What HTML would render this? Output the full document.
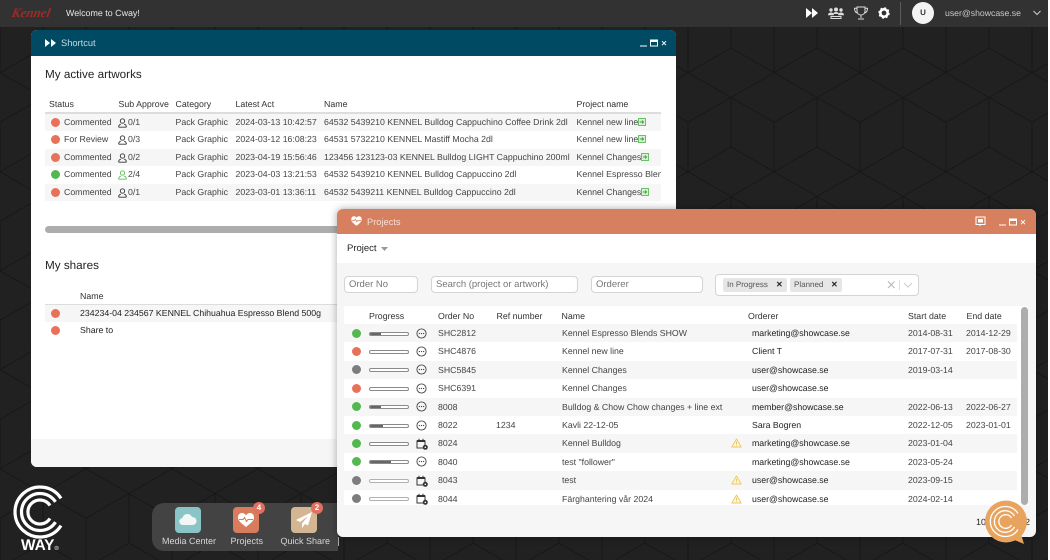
<!DOCTYPE html>
<html><head><meta charset="utf-8"><style>
html,body{margin:0;padding:0;width:1050px;height:560px;overflow:hidden;background:#fff;font-family:"Liberation Sans",sans-serif;text-rendering:geometricPrecision}
#bg{position:absolute;left:0;top:0;width:1048px;height:560px}
.a{position:absolute;white-space:nowrap}
.win{position:absolute;border-radius:6px;overflow:hidden;background:#fff}
.r{position:absolute;font-size:8.75px;color:#444;white-space:nowrap}
.r span,.r svg,.r i{position:absolute}
.r span{top:0}
.d{width:9px;height:9px;border-radius:50%;display:block}
.re{background:#e8715a}.gr{background:#52b84f}.gy{background:#7d7d80}
#s .r{left:14px;width:616px;height:17.4px;line-height:17.4px}
#s .o,#p .o{background:#f6f6f6}
#s .d{left:6px;top:4px}
.c1{left:19px}.c2{left:73px;top:4px}.t2{left:83px}.c3{left:130.5px}.c4{left:190.5px}.c5{left:279px}.c6{left:531.5px;width:84.5px;overflow:hidden}
.h{font-size:8.8px;color:#333;line-height:12px}
#p .r{left:7px;width:673px;height:18.4px;line-height:18.4px}
#p .d{left:7.5px;top:4.7px}
.b{left:25px;top:7.5px;width:38px;height:2px;border:1px solid #8a8a8a;border-radius:2px;background:#fff;overflow:hidden}
.b b{display:block;height:100%;background:#666}
.l{border-color:#b0b0b0}
.k1{left:94px}.k2{left:152px}.k3{left:218px}.k4{left:408px;color:#222}.k5{left:564px}.k6{left:622px}
.ic{left:72px;top:3.5px}
.w{left:387px;top:4px}
.in{position:absolute;top:276px;height:15px;border:1px solid #d4d4d4;border-radius:4px;background:#fff;font-size:9.5px;line-height:15px;color:#777;padding-left:4px;box-sizing:content-box}
.r svg.ln{position:static;vertical-align:-1px}
</style></head><body>
<svg width="0" height="0" style="position:absolute"><defs>
<symbol id="more" viewBox="0 0 11 11"><circle cx="5.5" cy="5.5" r="4.6" fill="none" stroke="#444" stroke-width=".9"/><circle cx="3.4" cy="5.5" r=".65" fill="#444"/><circle cx="5.5" cy="5.5" r=".65" fill="#444"/><circle cx="7.6" cy="5.5" r=".65" fill="#444"/></symbol>
<symbol id="cal" viewBox="0 0 12 12"><path d="M1 3h8v7H1zM3 .8v2M7 .8v2" fill="none" stroke="#333" stroke-width="1"/><rect x="1" y="2" width="8" height="2" fill="#333"/><circle cx="9.3" cy="9.3" r="2.5" fill="#333"/><circle cx="9.3" cy="9.3" r=".8" fill="#fff"/></symbol>
<symbol id="warn" viewBox="0 0 11 10"><path d="M5.5 1L10.2 9H.8z" fill="#fdf6dc" stroke="#eec65c" stroke-width=".9" stroke-linejoin="round"/><path d="M5.5 3.8v2.6M5.5 7.2v.7" stroke="#e2b53e" stroke-width=".8"/></symbol>
<symbol id="usr" viewBox="0 0 9 10"><circle cx="4.5" cy="3" r="2.2" fill="none" stroke="currentColor" stroke-width=".9"/><path d="M.7 9.2c0-2 1.2-2.9 2.2-3M8.3 9.2c0-2-1.2-2.9-2.2-3M.7 9.2h7.6" fill="none" stroke="currentColor" stroke-width=".9"/></symbol>
<symbol id="lnk" viewBox="0 0 8 8"><rect x=".5" y=".5" width="7" height="7" fill="#d9f2d6" stroke="#5dbb58" stroke-width=".9"/><path d="M1.8 4h3.6M4 2.4L5.6 4 4 5.6" fill="none" stroke="#3fa43a" stroke-width=".9"/></symbol>
<symbol id="ctl" viewBox="0 0 30 8"><path d="M1 7h7" stroke="#fff" stroke-width="1"/><rect x="11.5" y="1" width="7" height="6" fill="none" stroke="#fff"/><rect x="11.5" y="1" width="7" height="2" fill="#fff"/><path d="M23 2.2l4 4M27 2.2l-4 4" stroke="#fff" stroke-width="1"/></symbol>
<pattern id="hx" width="86" height="99" patternUnits="userSpaceOnUse" y="48"><path d="M43 49.5V99M0 74.25V99M86 74.25V99M0 0V24.75M86 0V24.75M43 0L0 24.75L43 49.5L0 74.25M43 0L86 24.75L43 49.5L86 74.25" fill="none" stroke="#171717" stroke-width="1"/></pattern>
</defs></svg>

<svg id="bg"><rect width="1048" height="560" fill="#212122"/><rect width="1048" height="560" fill="url(#hx)"/></svg>

<!-- top bar -->
<div class="a" style="left:0;top:0;width:1048px;height:27px;background:#323232"></div>
<div class="a" style="left:12px;top:5px;font:italic 700 13px 'Liberation Serif',serif;color:#a02a28;line-height:16px;transform:skewX(-12deg)">Kennel</div>
<div class="a" style="left:66px;top:7px;font-size:8.9px;line-height:12px;color:#e6e6e6">Welcome to Cway!</div>
<svg class="a" style="left:800px;top:3px" width="100" height="20" viewBox="0 0 100 20">
<path d="M6 5l6 5-6 5zM12 5l6 5-6 5z" fill="#fff"/>
<g fill="#ddd"><circle cx="36" cy="6.5" r="2"/><circle cx="31" cy="7" r="1.7"/><circle cx="41" cy="7" r="1.7"/><path d="M28 12.2c0-2 1.5-2.7 3-2.7s2.6.7 3 2.7zM38 12.2c.4-2 1.5-2.7 3-2.7s3 .7 3 2.7zM33 11c.5-1.5 1.5-2 3-2s2.5.5 3 2z"/></g><path d="M31 13.5h10v2H31z" fill="none" stroke="#ddd"/>
<path d="M57 4h8v4c0 2.5-1.8 4-4 4s-4-1.5-4-4zM57 5.2h-2.5c0 3 1 4.3 3 4.8M65 5.2h2.5c0 3-1 4.3-3 4.8M61 12v3M58 16h6" fill="none" stroke="#ddd" stroke-width="1"/>
<circle cx="84" cy="10" r="3.7" fill="none" stroke="#fff" stroke-width="2.6"/><circle cx="84" cy="10" r="5" fill="none" stroke="#fff" stroke-width="1.4" stroke-dasharray="2 1.93"/>
</svg>
<div class="a" style="left:900px;top:2px;width:1px;height:23px;background:#5c5c5c"></div>
<div class="a" style="left:912px;top:2px;width:22px;height:22px;border-radius:50%;background:#f4f4f4;color:#333;font:700 8px/22px 'Liberation Sans',sans-serif;text-align:center">U</div>
<div class="a" style="left:945px;top:7px;font-size:8.7px;line-height:12px;color:#c8c8c8">user@showcase.se</div>
<svg class="a" style="left:1032px;top:10px" width="10" height="6"><path d="M1.5 1L5 4.5 8.5 1" fill="none" stroke="#ccc"/></svg>

<!-- Shortcut -->
<div class="win" style="left:31px;top:30px;width:645px;height:437px">
 <div class="a" style="left:0;top:0;width:645px;height:26px;background:#004a63"></div>
 <svg class="a" style="left:14px;top:9px" width="12" height="8"><path d="M0 0l5 4-5 4zM6 0l5 4-5 4z" fill="#fff"/></svg>
 <div class="a" style="left:30px;top:7px;font-size:9.3px;line-height:12px;color:#c4dbe4">Shortcut</div>
 <svg class="a" style="left:608px;top:9px" width="30" height="8"><use href="#ctl"/></svg>
 <div class="a" style="left:14px;top:37px;font-size:11.7px;line-height:15px;color:#222">My active artworks</div>
 <div class="a h" style="left:18px;top:68px">Status</div>
 <div class="a h" style="left:87.5px;top:68px">Sub Approve</div>
 <div class="a h" style="left:144.5px;top:68px">Category</div>
 <div class="a h" style="left:204.5px;top:68px">Latest Act</div>
 <div class="a h" style="left:293px;top:68px">Name</div>
 <div class="a h" style="left:545.5px;top:68px">Project name</div>
 <div class="a" style="left:14px;top:82px;width:616px;height:2px;background:#ddd"></div>
 <div id="s">
  <div class="r o" style="top:84px"><i class="d re"></i><span class="c1">Commented</span><svg class="c2" style="color:#333" width="9" height="10"><use href="#usr"/></svg><span class="t2">0/1</span><span class="c3">Pack Graphic</span><span class="c4">2024-03-13 10:42:57</span><span class="c5">64532 5439210 KENNEL Bulldog Cappuchino Coffee Drink 2dl</span><span class="c6">Kennel new line<svg class="ln" width="8" height="8"><use href="#lnk"/></svg></span></div>
  <div class="r" style="top:101.4px"><i class="d re"></i><span class="c1">For Review</span><svg class="c2" style="color:#333" width="9" height="10"><use href="#usr"/></svg><span class="t2">0/3</span><span class="c3">Pack Graphic</span><span class="c4">2024-03-12 16:08:23</span><span class="c5">64531 5732210 KENNEL Mastiff Mocha 2dl</span><span class="c6">Kennel new line<svg class="ln" width="8" height="8"><use href="#lnk"/></svg></span></div>
  <div class="r o" style="top:118.8px"><i class="d re"></i><span class="c1">Commented</span><svg class="c2" style="color:#333" width="9" height="10"><use href="#usr"/></svg><span class="t2">0/2</span><span class="c3">Pack Graphic</span><span class="c4">2023-04-19 15:56:46</span><span class="c5">123456 123123-03 KENNEL Bulldog LIGHT Cappuchino 200ml</span><span class="c6">Kennel Changes<svg class="ln" width="8" height="8"><use href="#lnk"/></svg></span></div>
  <div class="r" style="top:136.2px"><i class="d gr"></i><span class="c1">Commented</span><svg class="c2" style="color:#5dbb58" width="9" height="10"><use href="#usr"/></svg><span class="t2">2/4</span><span class="c3">Pack Graphic</span><span class="c4">2023-04-03 13:21:53</span><span class="c5">64532 5439210 KENNEL Bulldog Cappuccino 2dl</span><span class="c6">Kennel Espresso Blends</span></div>
  <div class="r o" style="top:153.6px"><i class="d re"></i><span class="c1">Commented</span><svg class="c2" style="color:#333" width="9" height="10"><use href="#usr"/></svg><span class="t2">0/1</span><span class="c3">Pack Graphic</span><span class="c4">2023-03-01 13:36:11</span><span class="c5">64532 5439211 KENNEL Bulldog Cappuccino 2dl</span><span class="c6">Kennel Changes<svg class="ln" width="8" height="8"><use href="#lnk"/></svg></span></div>
 </div>
 <div class="a" style="left:14px;top:196px;width:616px;height:7px;border-radius:4px;background:#adadad"></div>
 <div class="a" style="left:14px;top:228px;font-size:11.7px;line-height:15px;color:#222">My shares</div>
 <div class="a h" style="left:49px;top:260px">Name</div>
 <div class="a" style="left:14px;top:274px;width:616px;height:1.5px;background:#ddd"></div>
 <div class="a" style="left:14px;top:275px;width:616px;height:17.4px;background:#f6f6f6"></div>
 <i class="a d re" style="left:20px;top:279px"></i>
 <div class="a" style="left:49px;top:277px;font-size:8.75px;line-height:12px;color:#222">234234-04 234567 KENNEL Chihuahua Espresso Blend 500g</div>
 <i class="a d re" style="left:20px;top:296px"></i>
 <div class="a" style="left:49px;top:294px;font-size:8.75px;line-height:12px;color:#222">Share to</div>
 <div class="a" style="left:0;top:409px;width:645px;height:28px;background:#f6f6f6"></div>
</div>

<!-- Logo -->
<svg class="a" style="left:0;top:480px" width="70" height="62" viewBox="0 480 70 62">
<g fill="none" stroke="#fff" stroke-width="3.2">
<path d="M61 498.4A25 25 0 1 0 61 525.6"/>
<path d="M55.5 501.9A18.5 18.5 0 1 0 55.5 522.1"/>
<path d="M50 505.5A12 12 0 1 0 50 518.5"/>
</g></svg>
<div class="a" style="left:21px;top:537px;font:700 15.4px/17px 'Liberation Sans',sans-serif;color:#fff;letter-spacing:-.1px">WAY<span style="font-size:6px;font-weight:400;letter-spacing:0">®</span></div>

<!-- Dock -->
<div class="a" style="left:152px;top:503px;width:186px;height:48px;border-radius:12px 0 0 12px;background:#434343"></div>
<div class="a" style="left:175px;top:507px;width:26px;height:26px;border-radius:4px;background:#8ac4c6"></div>
<svg class="a" style="left:179px;top:513px" width="18" height="13"><path d="M4 12a3.5 3.5 0 0 1-.5-7A5 5 0 0 1 13 4a4 4 0 0 1 1 8z" fill="#f2f6f6"/></svg>
<div class="a" style="left:233px;top:507px;width:26px;height:26px;border-radius:4px;background:#d97c5e"></div>
<svg class="a" style="left:237px;top:512px" width="18" height="16"><path d="M9 15C4 11 1 9 1 5.3 1 2.5 3 1 5 1c1.7 0 3 1 4 2.2C10 2 11.3 1 13 1c2 0 4 1.5 4 4.3C17 9 14 11 9 15z" fill="#fff"/><path d="M2 7.5h4l1.5-2 2 4 1.5-2h5" fill="none" stroke="#d97c5e" stroke-width="1.1"/></svg>
<div class="a" style="left:291px;top:507px;width:26px;height:26px;border-radius:4px;background:#d5b692"></div>
<svg class="a" style="left:295px;top:511px" width="18" height="18"><path d="M17 1L1 9l4 2 8-6-6 7.5V17l3-4 3 1.5z" fill="#fff"/></svg>
<div class="a" style="left:253px;top:502px;width:12px;height:12px;border-radius:50%;background:#e3705e;color:#fff;font:700 8px/12px 'Liberation Sans',sans-serif;text-align:center">4</div>
<div class="a" style="left:311px;top:502px;width:12px;height:12px;border-radius:50%;background:#e3705e;color:#fff;font:700 8px/12px 'Liberation Sans',sans-serif;text-align:center">2</div>
<div class="a" style="left:162px;top:535px;font-size:9px;line-height:12px;color:#d6d6d6">Media Center</div>
<div class="a" style="left:230.5px;top:535px;font-size:9px;line-height:12px;color:#d6d6d6">Projects</div>
<div class="a" style="left:280.5px;top:535px;font-size:9px;line-height:12px;color:#d6d6d6">Quick Share</div>
<div class="a" style="left:338px;top:537px;width:1px;height:9px;background:#aaa"></div>

<!-- Projects -->
<div class="win" style="left:337px;top:209px;width:699px;height:328px;box-shadow:0 0 8px rgba(0,0,0,.35);background:#f6f6f6">
 <div class="a" style="left:0;top:0;width:699px;height:25px;background:#d6805f"></div>
 <svg class="a" style="left:14px;top:7px" width="11" height="10"><path d="M5.5 9.8C2 7 .3 5.5.3 3.2.3 1.3 1.7.3 3 .3c1.1 0 2 .6 2.5 1.5C6 .9 6.9.3 8 .3c1.3 0 2.7 1 2.7 2.9 0 2.3-1.7 3.8-5.2 6.6z" fill="#fff"/><path d="M1 4.5h2.5l1-1.3 1.3 2.6 1-1.3H10" fill="none" stroke="#d6805f" stroke-width=".8"/></svg>
 <div class="a" style="left:30px;top:7px;font-size:9.3px;line-height:12px;color:#f5dfd5">Projects</div>
 <svg class="a" style="left:637px;top:7px" width="13" height="12"><rect x="2" y="1" width="9" height="7.5" fill="none" stroke="#fff"/><rect x="4" y="3" width="5" height="3.5" fill="#fff"/><path d="M5 8.5h2l-1 2z" fill="#fff"/></svg>
 <svg class="a" style="left:661px;top:9px" width="30" height="8"><use href="#ctl"/></svg>
 <div class="a" style="left:0;top:25px;width:699px;height:29px;background:#fff"></div>
 <div class="a" style="left:10px;top:34px;font-size:9.5px;line-height:12px;color:#222">Project</div>
 <svg class="a" style="left:44px;top:38px" width="8" height="5"><path d="M0 0h7L3.5 4z" fill="#999"/></svg>
</div>
<div class="in" style="left:344px;width:68px">Order No</div>
<div class="in" style="left:431px;width:141px">Search (project or artwork)</div>
<div class="in" style="left:591px;width:106px">Orderer</div>
<div class="in" style="left:715px;top:274px;height:20px;width:198px"></div>
<div class="a" style="left:723px;top:278px;width:64px;height:14px;background:#e6e6e6;border-radius:2px;font-size:8px;line-height:14px;color:#555;text-indent:4px">In Progress<span style="position:absolute;left:53px;top:0;text-indent:0;color:#222;font-weight:700">✕</span></div>
<div class="a" style="left:790px;top:278px;width:52px;height:14px;background:#e6e6e6;border-radius:2px;font-size:8px;line-height:14px;color:#555;text-indent:4px">Planned<span style="position:absolute;left:41px;top:0;text-indent:0;color:#222;font-weight:700">✕</span></div>
<svg class="a" style="left:886px;top:279px" width="32" height="12"><path d="M2 2.5l6.5 6.5M8.5 2.5L2 9" stroke="#bbb" stroke-width="1.2"/><path d="M13.5 1v10" stroke="#ddd"/><path d="M18 4l4 4 4-4" fill="none" stroke="#ccc"/></svg>

<div class="a" style="left:344px;top:306px;width:684px;height:199px;background:#fff"></div>
<div class="a h" style="left:369px;top:310px">Progress</div>
<div class="a h" style="left:438px;top:310px">Order No</div>
<div class="a h" style="left:496.5px;top:310px">Ref number</div>
<div class="a h" style="left:561.5px;top:310px">Name</div>
<div class="a h" style="left:748px;top:310px">Orderer</div>
<div class="a h" style="left:908px;top:310px">Start date</div>
<div class="a h" style="left:966.5px;top:310px">End date</div>
<div class="a" style="left:344px;top:324px;width:673px;height:1px;background:#d8d8d8"></div>
<div class="a" style="left:1021px;top:307px;width:7px;height:198px;border-radius:4px;background:#adadad"></div>

<div id="p" style="position:absolute;left:337px;top:0">
 <div class="r o" style="top:324px"><i class="d gr"></i><i class="b"><b style="width:30%"></b></i><svg class="ic" width="11" height="11"><use href="#more"/></svg><span class="k1">SHC2812</span><span class="k3">Kennel Espresso Blends SHOW</span><span class="k4">marketing@showcase.se</span><span class="k5">2014-08-31</span><span class="k6">2014-12-29</span></div>
 <div class="r" style="top:342.4px"><i class="d re"></i><i class="b"><b style="width:0"></b></i><svg class="ic" width="11" height="11"><use href="#more"/></svg><span class="k1">SHC4876</span><span class="k3">Kennel new line</span><span class="k4">Client T</span><span class="k5">2017-07-31</span><span class="k6">2017-08-30</span></div>
 <div class="r o" style="top:360.8px"><i class="d gy"></i><i class="b"><b style="width:0"></b></i><svg class="ic" width="11" height="11"><use href="#more"/></svg><span class="k1">SHC5845</span><span class="k3">Kennel Changes</span><span class="k4">user@showcase.se</span><span class="k5">2019-03-14</span></div>
 <div class="r" style="top:379.2px"><i class="d re"></i><i class="b"><b style="width:0"></b></i><svg class="ic" width="11" height="11"><use href="#more"/></svg><span class="k1">SHC6391</span><span class="k3">Kennel Changes</span><span class="k4">user@showcase.se</span></div>
 <div class="r o" style="top:397.6px"><i class="d gr"></i><i class="b"><b style="width:30%"></b></i><svg class="ic" width="11" height="11"><use href="#more"/></svg><span class="k1">8008</span><span class="k3">Bulldog &amp; Chow Chow changes + line ext</span><span class="k4">member@showcase.se</span><span class="k5">2022-06-13</span><span class="k6">2022-06-27</span></div>
 <div class="r" style="top:416px"><i class="d gr"></i><i class="b"><b style="width:35%"></b></i><svg class="ic" width="11" height="11"><use href="#more"/></svg><span class="k1">8022</span><span class="k2">1234</span><span class="k3">Kavli 22-12-05</span><span class="k4">Sara Bogren</span><span class="k5">2022-12-05</span><span class="k6">2023-01-01</span></div>
 <div class="r o" style="top:434.4px"><i class="d gr"></i><i class="b"><b style="width:0"></b></i><svg class="ic" width="12" height="12"><use href="#cal"/></svg><span class="k1">8024</span><span class="k3">Kennel Bulldog</span><svg class="w" width="11" height="10"><use href="#warn"/></svg><span class="k4">marketing@showcase.se</span><span class="k5">2023-01-04</span></div>
 <div class="r" style="top:452.8px"><i class="d gr"></i><i class="b"><b style="width:55%"></b></i><svg class="ic" width="11" height="11"><use href="#more"/></svg><span class="k1">8040</span><span class="k3">test "follower"</span><span class="k4">marketing@showcase.se</span><span class="k5">2023-05-24</span></div>
 <div class="r o" style="top:471.2px"><i class="d gy"></i><i class="b l"><b style="width:0"></b></i><svg class="ic" width="12" height="12"><use href="#cal"/></svg><span class="k1">8043</span><span class="k3">test</span><svg class="w" width="11" height="10"><use href="#warn"/></svg><span class="k4">user@showcase.se</span><span class="k5">2023-09-15</span></div>
 <div class="r" style="top:489.6px"><i class="d gy"></i><i class="b l"><b style="width:0"></b></i><svg class="ic" width="12" height="12"><use href="#cal"/></svg><span class="k1">8044</span><span class="k3">Färghantering vår 2024</span><svg class="w" width="11" height="10"><use href="#warn"/></svg><span class="k4">user@showcase.se</span><span class="k5">2024-02-14</span></div>
</div>

<div class="a" style="left:976px;top:516px;font-size:9px;line-height:12px;color:#222">10</div>
<div class="a" style="left:1025px;top:516px;font-size:9px;line-height:12px;color:#222">2</div>
<svg class="a" style="left:982px;top:498px" width="46" height="48" viewBox="0 0 46 48">
<circle cx="24" cy="23.5" r="21" fill="#e8a35e"/><path d="M30 41l12 5-4-13z" fill="#e8a35e"/>
<g fill="none" stroke="#fff" stroke-width="1.3">
<path d="M36 15.5A15 15 0 1 0 36 31.5"/><path d="M32.5 18A10.8 10.8 0 1 0 32.5 29"/><path d="M29.5 20A6.8 6.8 0 1 0 29.5 27"/>
</g></svg>
</body></html>
